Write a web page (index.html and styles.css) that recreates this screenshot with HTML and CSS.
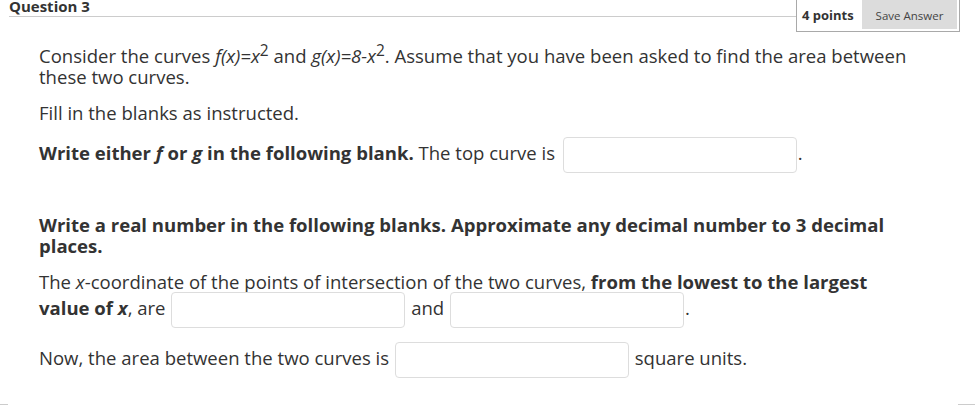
FILE: index.html
```html
<!DOCTYPE html>
<html>
<head>
<meta charset="utf-8">
<link rel="stylesheet" href="styles.css">
</head>
<body>
<div class="question">
  <div class="q-header">
    <h3 class="q-title">Question 3</h3>
    <div class="q-rule"></div>
    <div class="q-points">
      <span class="points">4 points</span>
      <span class="save-btn">Save Answer</span>
    </div>
  </div>
  <div class="q-body">
    <p class="para">Consider the curves <i>f(x)=x</i><sup>2</sup> and <i>g(x)=8-x</i><sup>2</sup>. Assume that you have been asked to find the area between these two curves.</p>
    <p class="para">Fill in the blanks as instructed.</p>
    <p class="para row1"><b>Write either <i>f</i> or <i>g</i> in the following blank.</b> The top curve is <span class="blank"></span>.</p>
    <p class="para bold-para"><b>Write a real number in the following blanks. Approximate any decimal number to 3 decimal places.</b></p>
    <p class="para row2">The <i>x</i>-coordinate of the points of intersection of the two curves, <b>from the lowest to the largest value of <i>x</i></b>, are <span class="blank"></span> and <span class="blank"></span>.</p>
    <p class="para row3">Now, the area between the two curves is <span class="blank"></span> square units.</p>
  </div>
  <div class="q-footer">
    <span class="stub"></span>
    <span class="stub stub-r"></span>
  </div>
</div>
</body>
</html>
```

FILE: styles.css
```css
html, body {
  margin: 0;
  padding: 0;
  background: #ffffff;
}
body {
  font-family: "Open Sans", "Liberation Sans", sans-serif;
  color: #333333;
  width: 975px;
  height: 410px;
  overflow: hidden;
}
.q-header {
  display: flex;
  align-items: flex-start;
  height: 34px;
  margin-top: -4px;
}
.q-title {
  margin: 0 0 0 9px;
  font-size: 15px;
  font-weight: 700;
  line-height: 20px;
  color: #333333;
  border-bottom: 1px solid #cccccc;
  height: 20px;
}
.q-rule {
  flex: 1;
  height: 20px;
  border-bottom: 1px solid #cccccc;
}
.q-points {
  display: flex;
  align-items: center;
  width: 164px;
  height: 36px;
  border: 1px solid #a9a9a9;
  border-top: none;
  box-sizing: border-box;
  margin-right: 15px;
}
.points {
  font-size: 13px;
  font-weight: 700;
  margin-left: 5px;
  padding-top: 2px;
  width: 60px;
}
.save-btn {
  background: #dcdcdc;
  color: #444444;
  font-size: 11.5px;
  width: 95px;
  height: 33px;
  line-height: 40px;
  text-align: center;
  align-self: flex-start;
}
.q-body {
  padding-left: 39px;
  width: 880px;
  font-size: 18.55px;
  line-height: 21px;
  padding-top: 15px;
}
.para {
  margin: 0 0 15px 0;
}
.para b {
  font-weight: 700;
}
.para sup {
  font-size: 15.5px;
  line-height: 0;
  vertical-align: 7px;
}
.row1 {
  line-height: 40px;
  margin-top: -5px;
  margin-bottom: 41px;
}
.row1 .blank {
  margin-left: 3px;
}
.row3 {
  line-height: 38px;
  margin-top: -4px;
}
.blank {
  display: inline-block;
  width: 234px;
  height: 36px;
  border: 1px solid #dddddd;
  border-radius: 4px;
  box-sizing: border-box;
  vertical-align: middle;
  margin: 0 1px 0 1px;
}
.q-footer {
  display: flex;
  justify-content: space-between;
  margin-top: 26px;
}
.stub {
  width: 8px;
  border-top: 1px solid #cccccc;
}
.stub-r {
  width: 17px;
}
```
